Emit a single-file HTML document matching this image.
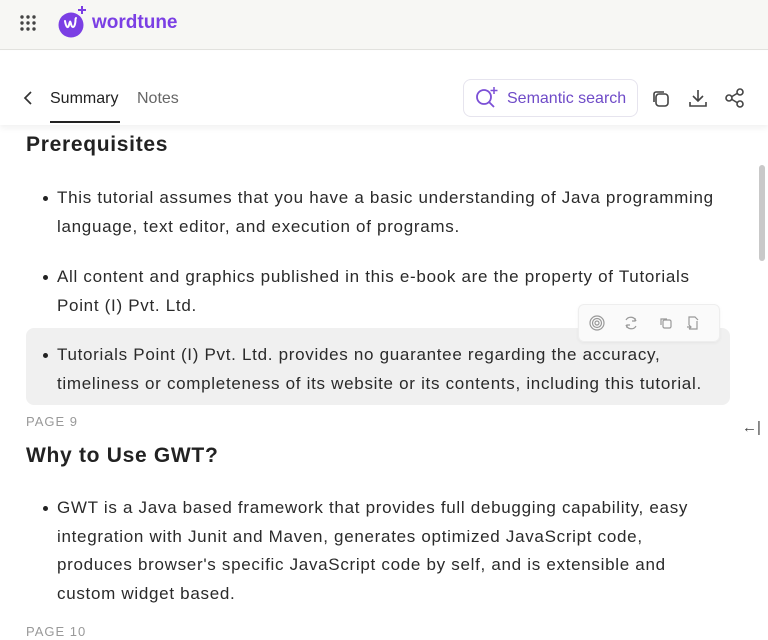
<!DOCTYPE html>
<html><head><style>
*{margin:0;padding:0;box-sizing:border-box}
body{width:768px;height:640px;overflow:hidden;background:#fff;font-family:"Liberation Sans",sans-serif;color:#222;position:relative}
.hdr{position:absolute;left:0;top:0;width:768px;height:50px;background:#f7f7f4;border-bottom:1px solid #e2e2df}
.tab{position:absolute;top:90px;font-size:16px}
.ab{position:absolute}
h2{position:absolute;left:26px;font-size:21px;font-weight:bold;color:#222;letter-spacing:0.7px}
.li{position:absolute;left:57px;font-size:17px;line-height:28.5px;color:#2a2a2a;width:700px;letter-spacing:0.7px}
.li:before{content:"";position:absolute;left:-14px;top:12px;width:5px;height:5px;border-radius:50%;background:#222}
.pg{position:absolute;left:26px;font-size:13px;color:#999;letter-spacing:1px}
</style></head><body>
<div class="hdr">
<svg class="ab" style="left:20px;top:15px" width="18" height="18"><g fill="#444"><circle cx="2" cy="2" r="1.7"/><circle cx="8" cy="2" r="1.7"/><circle cx="14" cy="2" r="1.7"/><circle cx="2" cy="8" r="1.7"/><circle cx="8" cy="8" r="1.7"/><circle cx="14" cy="8" r="1.7"/><circle cx="2" cy="14" r="1.7"/><circle cx="8" cy="14" r="1.7"/><circle cx="14" cy="14" r="1.7"/></g></svg>
<svg class="ab" style="left:58px;top:4px" width="30" height="36"><circle cx="13" cy="21" r="12.5" fill="#7b3fe4"/><path d="M7 17c1 6 3 8 4 4s1-5 2-1 3 4 4 0 0-5 1-6" stroke="#fff" stroke-width="2" fill="none" stroke-linecap="round"/><path d="M24 2v8M20 6h8" stroke="#7b3fe4" stroke-width="2"/></svg>
<div class="ab" style="left:92px;top:12px;font-size:19px;font-weight:bold;color:#7b3fe4">wordtune</div>
</div>
<div class="ab" style="left:0;top:51px;width:768px;height:74px;background:#fff;box-shadow:0 3px 6px rgba(0,0,0,.06)"></div>
<svg class="ab" style="left:22px;top:90px" width="12" height="16"><path d="M9 2L3 8l6 6" stroke="#333" stroke-width="1.7" fill="none"/></svg>
<div class="tab" style="left:50px;color:#222">Summary</div>
<div class="ab" style="left:50px;top:121px;width:70px;height:2px;background:#222"></div>
<div class="tab" style="left:137px;color:#666">Notes</div>
<div class="ab" style="left:463px;top:79px;width:175px;height:38px;border:1px solid #e6e4ee;border-radius:8px;background:#fff"></div>
<svg class="ab" style="left:475px;top:86px" width="26" height="24"><circle cx="9" cy="11" r="7" stroke="#7b4fd6" stroke-width="1.8" fill="none"/><path d="M14 16l5 5" stroke="#7b4fd6" stroke-width="1.8"/><path d="M19 1v7M15.5 4.5h7" stroke="#7b4fd6" stroke-width="1.5"/></svg>
<div class="ab" style="left:507px;top:90px;font-size:16px;color:#6f4bc8">Semantic search</div>
<svg class="ab" style="left:651px;top:89px" width="20" height="20"><rect x="5" y="5" width="12" height="12" rx="3" stroke="#444" stroke-width="1.6" fill="none"/><path d="M3 13V5a2 2 0 0 1 2-2h8" stroke="#444" stroke-width="1.6" fill="none"/></svg>
<svg class="ab" style="left:688px;top:88px" width="20" height="20"><path d="M10 2v11M5 8l5 5 5-5M2 14v4h16v-4" stroke="#444" stroke-width="1.6" fill="none"/></svg>
<svg class="ab" style="left:724px;top:88px" width="22" height="20"><circle cx="5" cy="10" r="3" stroke="#444" stroke-width="1.6" fill="none"/><circle cx="16" cy="4" r="3" stroke="#444" stroke-width="1.6" fill="none"/><circle cx="16" cy="16" r="3" stroke="#444" stroke-width="1.6" fill="none"/><path d="M8 8.5l5-3M8 11.5l5 3" stroke="#444" stroke-width="1.6"/></svg>
<div class="ab" style="left:759px;top:165px;width:6px;height:96px;border-radius:3px;background:#c9c9c9"></div>
<h2 style="top:133px">Prerequisites</h2>
<div class="li" style="top:184px">This tutorial assumes that you have a basic understanding of Java programming<br>language, text editor, and execution of programs.</div>
<div class="li" style="top:263px">All content and graphics published in this e-book are the property of Tutorials<br>Point (I) Pvt. Ltd.</div>
<div class="ab" style="left:26px;top:328px;width:704px;height:77px;background:#f0f0f0;border-radius:8px"></div>
<div class="li" style="top:341px">Tutorials Point (I) Pvt. Ltd. provides no guarantee regarding the accuracy,<br>timeliness or completeness of its website or its contents, including this tutorial.</div>
<div class="ab" style="left:578px;top:304px;width:142px;height:38px;background:rgba(250,250,250,.95);border:1px solid #eee;border-radius:6px;box-shadow:0 1px 3px rgba(0,0,0,.05)"></div>
<svg class="ab" style="left:589px;top:315px" width="120" height="16" fill="none" stroke="#999" stroke-width="1.2"><circle cx="8" cy="8" r="7"/><circle cx="8" cy="8" r="4.5"/><circle cx="8" cy="8" r="2"/><path d="M37 5a5.5 5.5 0 0 1 10 1M47 11a5.5 5.5 0 0 1-10-1M46 3v3h-3M38 13v-3h3"/><rect x="74" y="5" width="8" height="8" rx="1.5"/><path d="M72 10V4h6"/><path d="M108 6v8h-8M102 2h4l3 3M100 10v-8h2M98 12h4M100 10l2 2-2 2"/></svg>
<div class="pg" style="top:414px">PAGE 9</div>
<div class="ab" style="left:742px;top:419px;font-size:15px;color:#444">←|</div>
<h2 style="top:444px">Why to Use GWT?</h2>
<div class="li" style="top:494px">GWT is a Java based framework that provides full debugging capability, easy<br>integration with Junit and Maven, generates optimized JavaScript code,<br>produces browser's specific JavaScript code by self, and is extensible and<br>custom widget based.</div>
<div class="pg" style="top:624px">PAGE 10</div>
</body></html>
